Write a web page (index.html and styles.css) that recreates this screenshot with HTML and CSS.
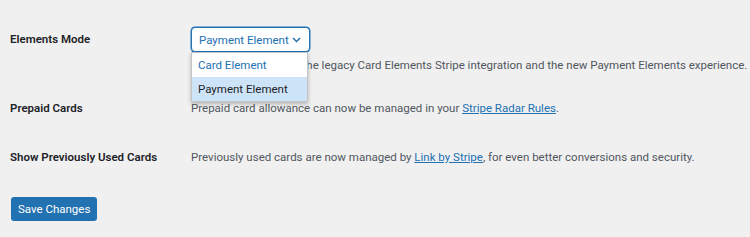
FILE: index.html
```html
<!DOCTYPE html>
<html>
<head>
    <title>Stripe settings</title>
    <link rel="stylesheet" href="styles.css">
</head>
<body>

    <div class="form">
        <div class="row row-mode">
            <div class="label">Elements Mode</div>
            <div class="field">
                <div class="select-wrap">
                    <div class="select">
                        Payment Element
                        <svg class="chevron" width="9" height="6" viewBox="0 0 9 6">
                            <path d="M1 1l3.5 3.5L8 1" fill="none" stroke="#2271b1" stroke-width="1.5"/>
                        </svg>
                    </div>
                    <ul class="menu">
                        <li>Card Element</li>
                        <li class="active">Payment Element</li>
                    </ul>
                </div>
                <p class="desc">Select between using the legacy Card Elements Stripe integration and the new Payment Elements experience.</p>
            </div>
        </div>

        <div class="row row-prepaid">
            <div class="label">Prepaid Cards</div>
            <div class="field">
                <p class="desc">Prepaid card allowance can now be managed in your <a href="#">Stripe Radar Rules</a>.</p>
            </div>
        </div>

        <div class="row row-saved">
            <div class="label">Show Previously Used Cards</div>
            <div class="field">
                <p class="desc">Previously used cards are now managed by <a href="#">Link by Stripe</a>, for even better conversions and security.</p>
            </div>
        </div>

        <button class="button">Save Changes</button>
    </div>

</body>
</html>
```

FILE: styles.css
```css
html, body {
    height: 100%; width: 100%;
}
body {
    margin: 0;
    background: #F0F0F1;
    font-family: Roboto, "Liberation Sans", sans-serif;
    font-size: 11.5px;
    color: #3C434A;
}
.form {
    padding: 27px 10px 0 10px;
}
.row {
    display: grid;
    grid-template-columns: 181px 1fr;
}
.label {
    color: #1D2327;
    font-weight: 600;
    line-height: 25px;
}
.desc {
    margin: 0;
    line-height: 18px;
    color: #50575E;
    white-space: nowrap;
}
.desc a {
    color: #2271B1;
}
.row-mode .desc {
    margin-top: 4px;
}
.row-prepaid {
    margin-top: 22px;
}
.row-prepaid .desc, .row-saved .desc {
    line-height: 25px;
}
.row-saved {
    margin-top: 24px;
}

.select-wrap {
    position: relative;
    width: 119px;
}
.select {
    box-sizing: border-box;
    height: 25px;
    display: flex;
    align-items: center;
    justify-content: space-between;
    padding: 0 8px 0 7px;
    border: 1px solid #2271B1;
    border-radius: 4px;
    background: #FFF;
    color: #2271B1;
    box-shadow: 0 0 0 0.5px #2271B1;
}
.chevron {
    margin-top: 1px;
}
.menu {
    position: absolute;
    top: 25px; left: 0;
    width: 117px;
    box-sizing: border-box;
    margin: 0; padding: 0;
    list-style: none;
    background: #FFF;
    border: 1px solid #C3C4C7;
    box-shadow: 0 2px 4px rgba(0,0,0,.25);
    z-index: 2;
}
.menu li {
    line-height: 24px;
    padding-left: 6px;
    color: #2271B1;
}
.menu li.active {
    background: #CDE3F7;
    color: #1D2327;
}

.button {
    margin: 27px 0 0 1px;
    height: 24px;
    padding: 0 7px;
    border: 0;
    border-radius: 3px;
    background: #2271B1;
    color: #FFF;
    font: inherit;
}
```
